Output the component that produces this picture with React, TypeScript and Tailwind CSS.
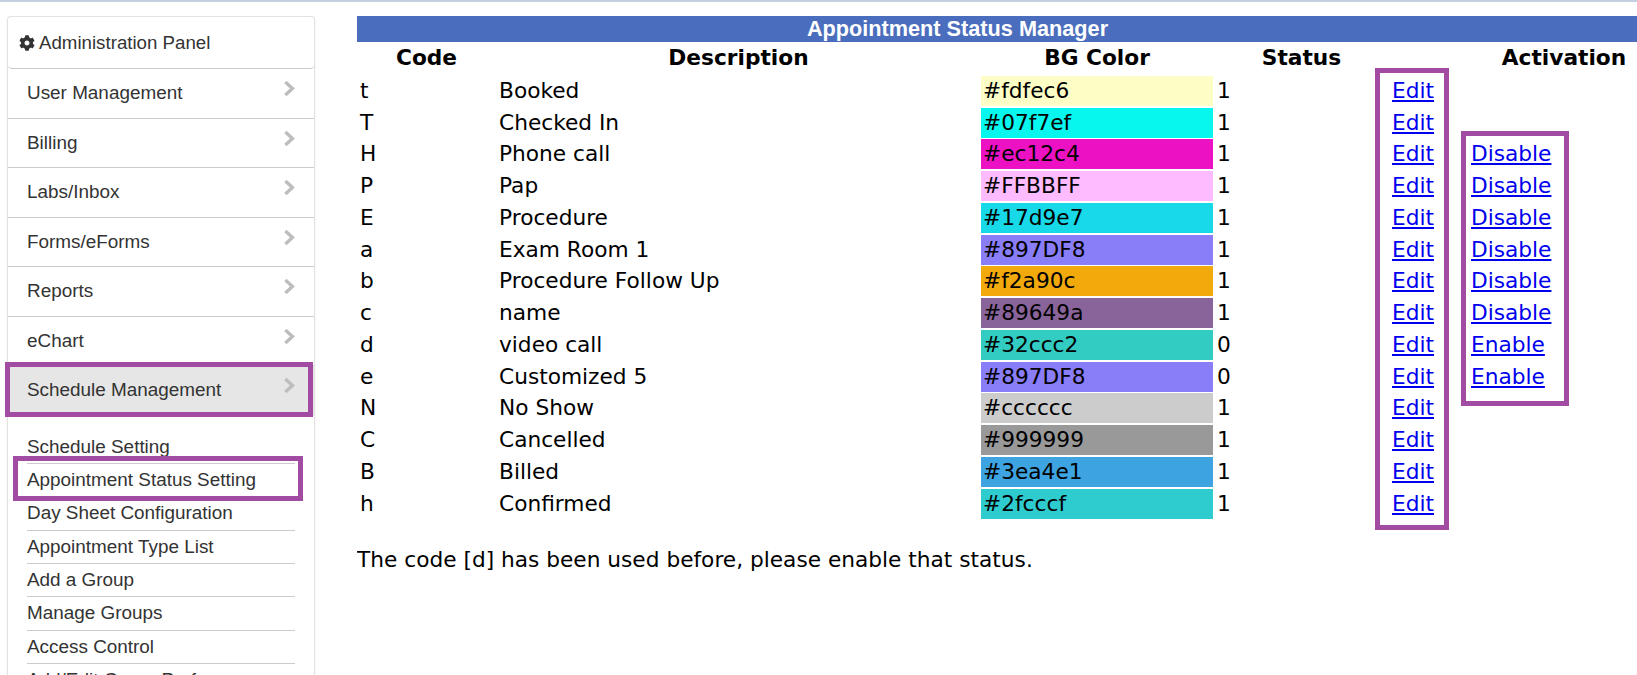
import { FaCog } from 'react-icons/fa';

const menu = ['User Management', 'Billing', 'Labs/Inbox', 'Forms/eForms', 'Reports', 'eChart', 'Schedule Management'];

const subMenu = [
  'Schedule Setting',
  'Appointment Status Setting',
  'Day Sheet Configuration',
  'Appointment Type List',
  'Add a Group',
  'Manage Groups',
  'Access Control',
  'Add/Edit Group Preferences',
];

const rows = [
  { code: 't', desc: 'Booked', color: '#fdfec6', status: 1 },
  { code: 'T', desc: 'Checked In', color: '#07f7ef', status: 1 },
  { code: 'H', desc: 'Phone call', color: '#ec12c4', status: 1, action: 'Disable' },
  { code: 'P', desc: 'Pap', color: '#FFBBFF', status: 1, action: 'Disable' },
  { code: 'E', desc: 'Procedure', color: '#17d9e7', status: 1, action: 'Disable' },
  { code: 'a', desc: 'Exam Room 1', color: '#897DF8', status: 1, action: 'Disable' },
  { code: 'b', desc: 'Procedure Follow Up', color: '#f2a90c', status: 1, action: 'Disable' },
  { code: 'c', desc: 'name', color: '#89649a', status: 1, action: 'Disable' },
  { code: 'd', desc: 'video call', color: '#32ccc2', status: 0, action: 'Enable' },
  { code: 'e', desc: 'Customized 5', color: '#897DF8', status: 0, action: 'Enable' },
  { code: 'N', desc: 'No Show', color: '#cccccc', status: 1 },
  { code: 'C', desc: 'Cancelled', color: '#999999', status: 1 },
  { code: 'B', desc: 'Billed', color: '#3ea4e1', status: 1 },
  { code: 'h', desc: 'Confirmed', color: '#2fcccf', status: 1 },
];

const columns = 'grid grid-cols-[139px_485px_232px_177px_79px_190px]';

function Chevron() {
  return (
    <svg viewBox="0 0 12 16" className="absolute right-[19px] top-[11px] h-[17px] w-[12px]">
      <path d="M2.4 1.4 9.4 8 2.4 14.6" fill="none" stroke="#bdbdbd" strokeWidth="3.4" />
    </svg>
  );
}

function Sidebar() {
  return (
    <aside className="ml-[7px] mt-[14px] h-[700px] w-[308px] shrink-0 rounded-[4px] border-x border-t border-[#e3e3e3] bg-white text-[18.9px] text-[#333] shadow-[0_1px_2px_rgba(0,0,0,0.1)]">
      <div className="flex h-[52px] items-center gap-[4px] rounded-[4px] border-b border-[#ccc] pl-[11px] pt-[1px] text-[18.7px]">
        <FaCog className="h-[16px] w-[16px] text-[#333]" />
        <span>Administration Panel</span>
      </div>
      {menu.map(item => (
        <div
          key={item}
          className={`relative flex h-[49.5px] items-center border-b pl-[19px] ${
            item === 'Schedule Management' ? 'border-[#e6e6e6] bg-[#e6e6e6]' : 'border-[#ccc]'
          }`}
        >
          {item}
          <Chevron />
        </div>
      ))}
      <div className="mx-[19px] mt-[15px]">
        {subMenu.map(item => (
          <div key={item} className="flex h-[33.4px] items-center border-b border-[#ccc] whitespace-nowrap">
            {item}
          </div>
        ))}
      </div>
    </aside>
  );
}

function StatusTable() {
  return (
    <main className="ml-[42px] mt-[14px] min-w-0 flex-1 overflow-hidden font-['DejaVu_Sans',sans-serif] text-[21.7px] text-black">
      <div className="h-[26px] bg-[#4a6ebd] pr-[79px] text-center font-['Liberation_Sans',sans-serif] text-[21.7px] leading-[26px] font-bold text-white">
        Appointment Status Manager
      </div>
      <div className={`${columns} h-[33px] w-[1302px] items-center text-center font-bold`}>
        <div>Code</div>
        <div>Description</div>
        <div>BG Color</div>
        <div>Status</div>
        <div />
        <div>Activation</div>
      </div>
      <div className="mt-[1px] flex w-[1302px] flex-col gap-[1.8px]">
        {rows.map(row => (
          <div key={row.desc} className={`${columns} h-[29.95px] items-stretch leading-[30px]`}>
            <div className="pl-[3px]">{row.code}</div>
            <div className="pl-[3px]">{row.desc}</div>
            <div className="pl-[2px]" style={{ backgroundColor: row.color }}>
              {row.color}
            </div>
            <div className="pl-[4px]">{row.status}</div>
            <div className="pl-[2px]">
              <a href="#" className="text-[#0000ee] underline">Edit</a>
            </div>
            <div className="pl-[2px]">
              {row.action && <a href="#" className="text-[#0000ee] underline">{row.action}</a>}
            </div>
          </div>
        ))}
      </div>
      <p className="mt-[26px]">The code [d] has been used before, please enable that status.</p>
    </main>
  );
}

export default function App() {
  return (
    <div className="relative h-[675px] overflow-hidden bg-white font-['Liberation_Sans',sans-serif]">
      <div className="h-[2px] bg-[#c5d0e3]" />
      <div className="flex">
        <Sidebar />
        <StatusTable />
      </div>
      {/* annotation boxes drawn over the screenshot */}
      <div className="absolute left-[5px] top-[362px] h-[55px] w-[308px] border-[5px] border-[#a24ba2]" />
      <div className="absolute left-[13px] top-[456px] h-[45px] w-[290px] border-[5px] border-[#a24ba2]" />
      <div className="absolute left-[1375px] top-[68px] h-[462px] w-[74px] border-[5px] border-[#a24ba2]" />
      <div className="absolute left-[1461px] top-[131px] h-[275px] w-[108px] border-[5px] border-[#a24ba2]" />
    </div>
  );
}
